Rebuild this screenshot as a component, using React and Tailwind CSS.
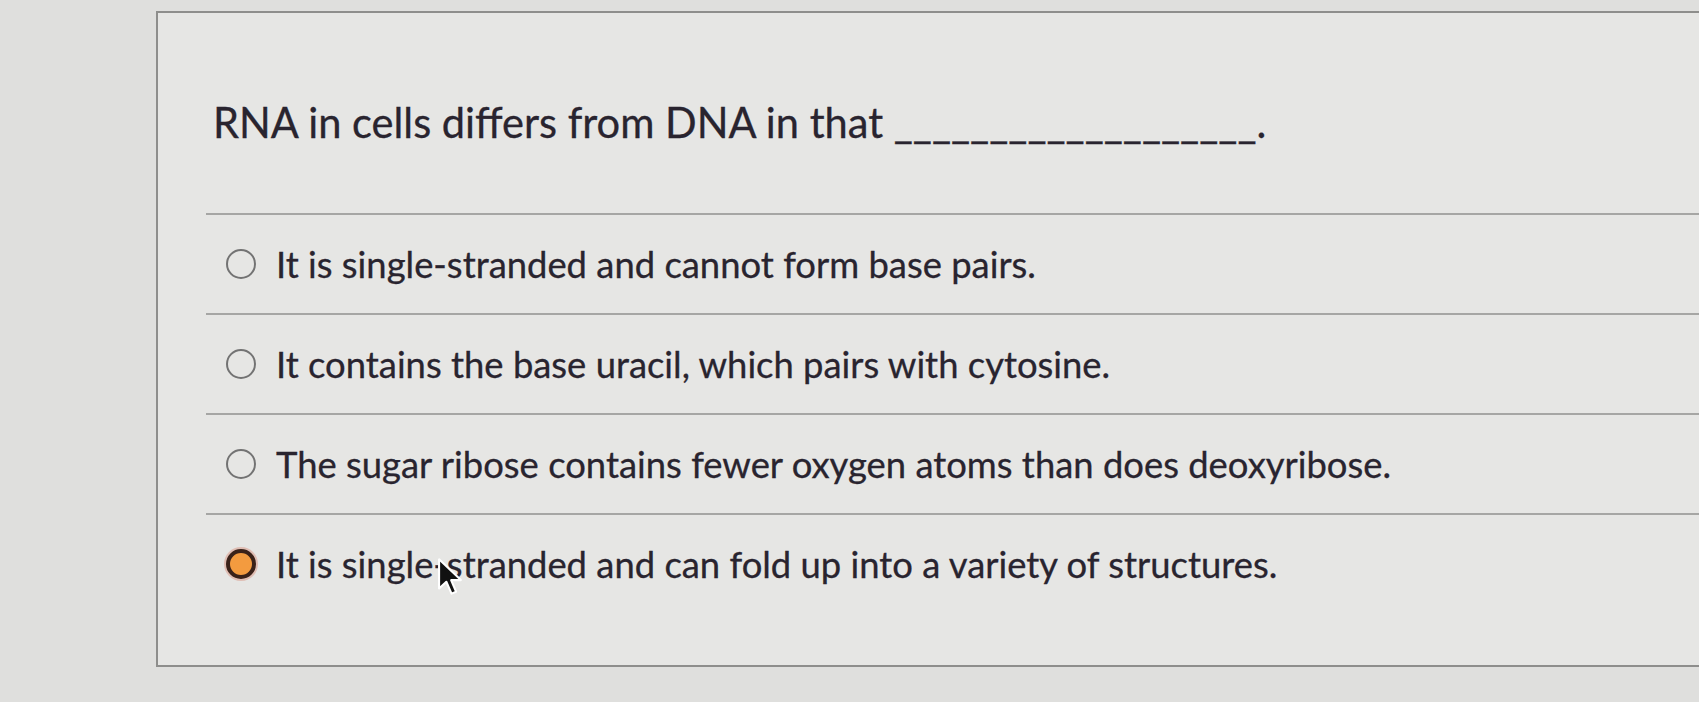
import React from 'react'

const OPTIONS = [
  { text: 'It is single-stranded and cannot form base pairs.' },
  { text: 'It contains the base uracil, which pairs with cytosine.' },
  { text: 'The sugar ribose contains fewer oxygen atoms than does deoxyribose.' },
  { text: 'It is single-stranded and can fold up into a variety of structures.', selected: true },
]

function Radio({ selected }) {
  if (selected) {
    return (
      <span className="w-[30px] h-[30px] shrink-0 rounded-full border-[4px] border-[#3a2219] bg-[#f39b3f] shadow-[0_0_0_2px_rgba(214,140,120,0.45)]" />
    )
  }
  return <span className="w-[30px] h-[30px] shrink-0 rounded-full border-[2.5px] border-[#737373]" />
}

function Cursor() {
  return (
    <svg className="absolute left-[437px] top-[557px]" width="27" height="40" viewBox="0 0 13 19">
      <path d="M1 1 L1 15 L4.5 11.8 L7 17.5 L9.2 16.6 L6.8 11 L11.5 11 Z" fill="#111" stroke="#fff" strokeWidth="1" strokeLinejoin="round" />
    </svg>
  )
}

export default function App() {
  return (
    <div className="relative h-[702px] w-full overflow-hidden bg-[#dfdfdd] pt-[11px] font-['Lato','Liberation_Sans',sans-serif] text-[#29242f]">
      {/* Question panel */}
      <div className="ml-[156px] h-[656px] border-l-2 border-t-2 border-b-2 border-[#8e8e8c] bg-[#e6e6e4] pl-[48px]">
        <div className="h-[200px] pl-[7px] pt-[85px]">
          <div className="text-[41.6px] leading-[49px] whitespace-nowrap [-webkit-text-stroke:0.3px_#29242f]">
            RNA in cells differs from DNA in that ___________________.
          </div>
        </div>

        {OPTIONS.map((o) => (
          <div key={o.text} className="h-[100px] border-t-2 border-[#a6a6a4] flex items-center gap-[20px] pl-[20px]">
            <Radio selected={o.selected} />
            <span className="text-[36.4px] leading-[44px] whitespace-nowrap [-webkit-text-stroke:0.3px_#29242f]">{o.text}</span>
          </div>
        ))}
      </div>

      <Cursor />
    </div>
  )
}
